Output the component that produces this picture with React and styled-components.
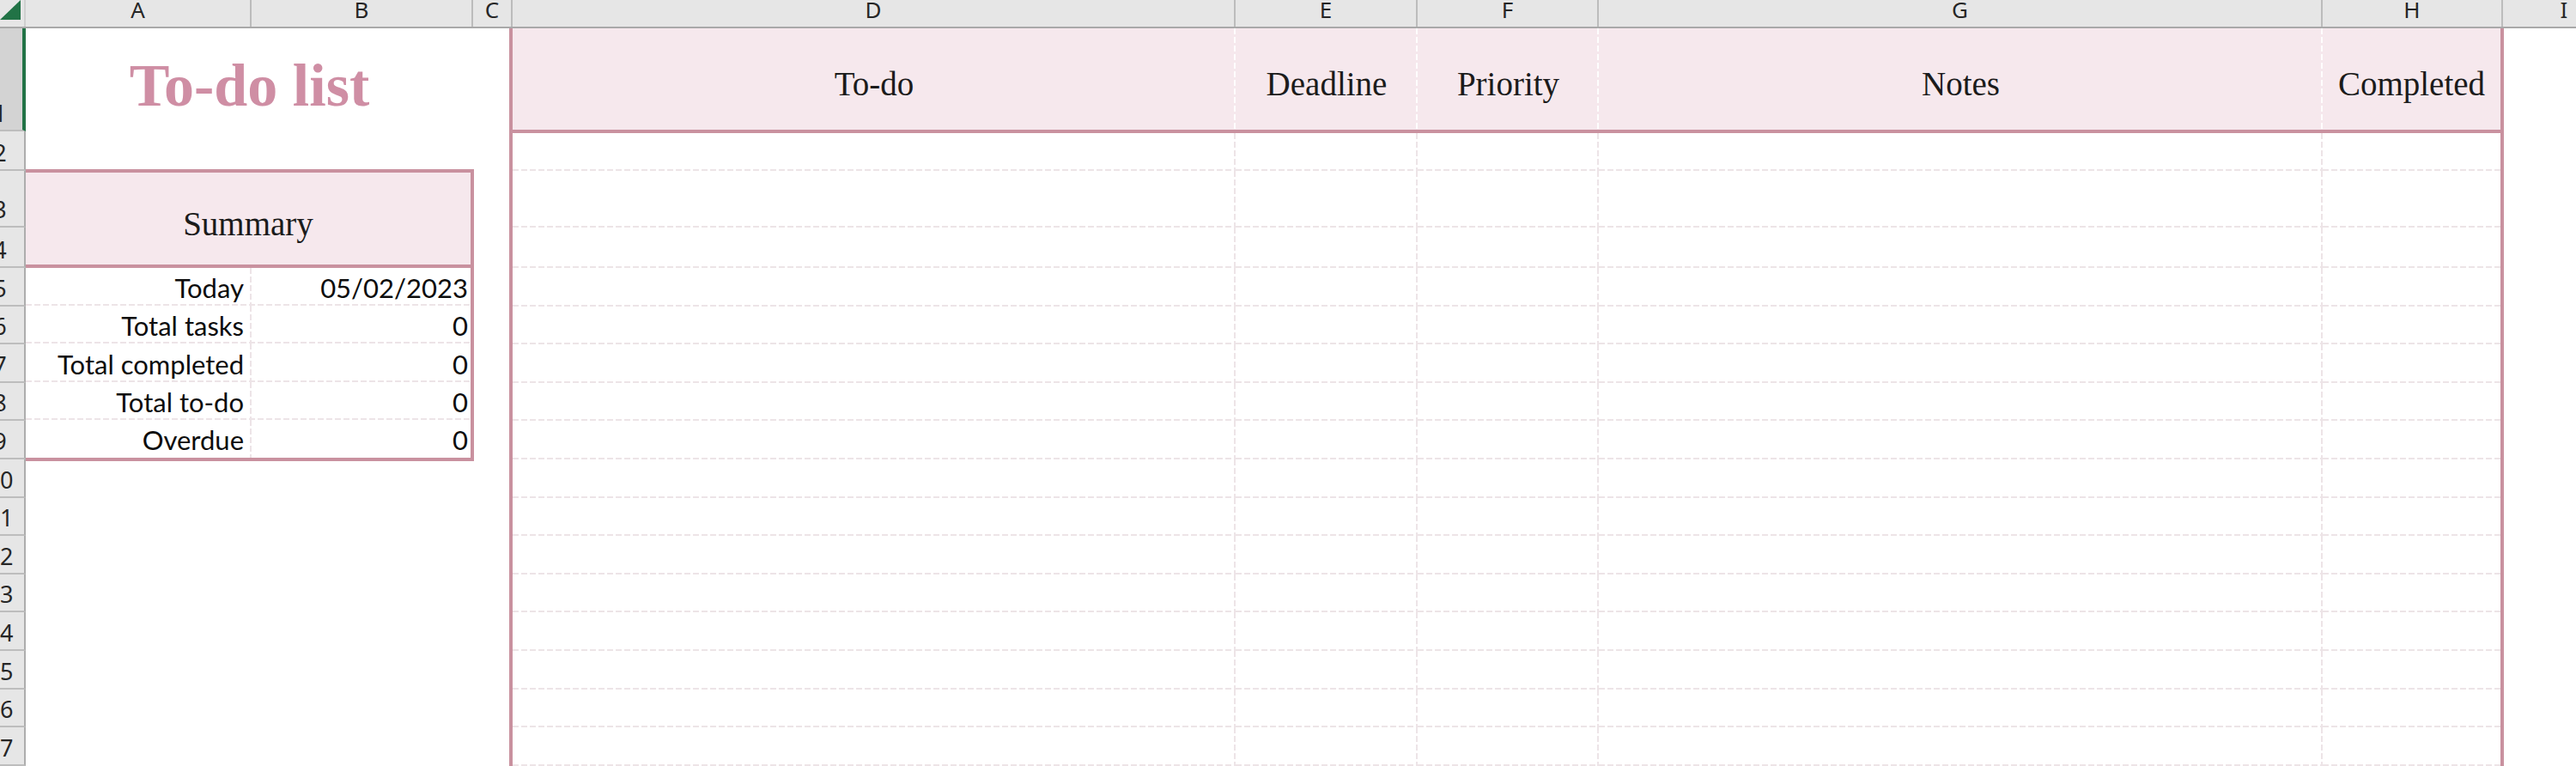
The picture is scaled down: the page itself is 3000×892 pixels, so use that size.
import React from 'react';
import styled, { createGlobalStyle, css } from 'styled-components';

const PINK = '#c9919f';
const PINK_FILL = '#f6e8ed';
const TITLE = '#cf8ea4';
const GRID_DASH = '#ede4e7';
const SERIF = '"Liberation Serif", "Times New Roman", serif';
const SANS = 'Lato, "Liberation Sans", sans-serif';
const UI = '"Noto Sans", "Open Sans", sans-serif';

// column widths as measured on the sheet
const COLUMNS = [
  { key: 'A', width: 263 },
  { key: 'B', width: 258 },
  { key: 'C', width: 46 },
  { key: 'D', width: 842 },
  { key: 'E', width: 212 },
  { key: 'F', width: 211 },
  { key: 'G', width: 843 },
  { key: 'H', width: 210 },
  { key: 'I', width: 144 },
];

const ROWS = [120, 46, 66, 47, ...Array(13).fill(44.6)];
// the to-do table eats 2px of row 2 with its thick header rule
const TABLE_ROWS = [122, 44, ...ROWS.slice(2)];

const TODO_HEADERS = ['To-do', 'Deadline', 'Priority', 'Notes', 'Completed'];

const STATS = [
  { label: 'Today', value: '05/02/2023' },
  { label: 'Total tasks', value: '0' },
  { label: 'Total completed', value: '0' },
  { label: 'Total to-do', value: '0' },
  { label: 'Overdue', value: '0' },
];

const px = (list) => list.map((v) => `${v}px`).join(' ');

const dashes = (dir, color) =>
  `repeating-linear-gradient(${dir}, ${color} 0 7px, transparent 7px 10px)`;

const dashedEdges = ({ $bottom, $right, $color = GRID_DASH }) => {
  const layers = [];
  if ($bottom) layers.push(`${dashes('to right', $color)} left bottom / 100% 2px no-repeat`);
  if ($right) layers.push(`${dashes('to bottom', $color)} right top / 2px 100% no-repeat`);
  return layers.length ? css`background: ${layers.join(', ')};` : '';
};

const GlobalStyle = createGlobalStyle`
  html, body {
    margin: 0;
    padding: 0;
    background: #ffffff;
    overflow: hidden;
  }
`;

const Page = styled.div`
  width: 3000px;
  height: 892px;
  overflow: hidden;
  background: #ffffff;
`;

/* column letters */

const ColumnBar = styled.div`
  display: flex;
  height: 33px;
  box-sizing: border-box;
  border-bottom: 2px solid #a9a9a9;
  background: #e6e6e6;
`;

const Corner = styled.div`
  flex: 0 0 30px;
  box-sizing: border-box;
  border-right: 2px solid #cfcfcf;
  display: flex;
  align-items: flex-start;
`;

const ColHead = styled.div`
  flex: 0 0 ${(p) => p.$width}px;
  box-sizing: border-box;
  border-right: 2px solid #bcbcbc;
  display: flex;
  justify-content: center;
  align-items: flex-start;
  font-family: ${UI};
  font-size: 26px;
  line-height: 22px;
  color: #262626;
`;

/* body */

const Body = styled.div`
  display: flex;
`;

const RowBar = styled.div`
  flex: 0 0 30px;
  display: grid;
  grid-template-rows: ${px(ROWS)};
`;

const RowHead = styled.div`
  box-sizing: border-box;
  display: flex;
  align-items: flex-end;
  overflow: hidden;
  padding-bottom: 8px;
  background: ${(p) => (p.$selected ? '#d3d3d3' : '#e6e6e6')};
  border-bottom: 2px solid #bdbdbd;
  border-right: ${(p) => (p.$selected ? '4px solid #217346' : '2px solid #adadad')};
`;

const RowNum = styled.span`
  flex: 0 0 60px;
  margin-left: -30px;
  text-align: center;
  font-family: ${UI};
  font-size: 27px;
  line-height: 22px;
  color: #262626;
`;

const Sheet = styled.div`
  display: grid;
  grid-template-columns: ${px(COLUMNS.map((c) => c.width))};
  grid-template-rows: ${px(ROWS)};
`;

const Title = styled.h1`
  grid-column: 1 / 3;
  grid-row: 1;
  margin: 0;
  padding-top: 14px;
  display: flex;
  align-items: center;
  justify-content: center;
  font-family: ${SERIF};
  font-weight: 700;
  font-size: 70px;
  color: ${TITLE};
`;

/* summary block */

const Summary = styled.section`
  grid-column: 1 / 3;
  grid-row: 3 / 10;
  margin: -2px -1px -2px 0;
  display: flex;
  flex-direction: column;
  border: 4px solid ${PINK};
  border-left: none;
`;

const SummaryHead = styled.div`
  flex: 0 0 111px;
  box-sizing: border-box;
  padding-top: 11px;
  display: flex;
  align-items: center;
  justify-content: center;
  background: ${PINK_FILL};
  border-bottom: 4px solid ${PINK};
  font-family: ${SERIF};
  font-size: 39px;
  color: #1b1b1b;
`;

const StatRow = styled.div`
  flex: 1;
  display: grid;
  grid-template-columns: 263px 1fr;
  ${dashedEdges}
`;

const StatCell = styled.div`
  display: flex;
  align-items: flex-end;
  justify-content: flex-end;
  padding: 0 ${(p) => (p.$label ? 9 : 3)}px 6px 0;
  font-family: ${SANS};
  font-size: 31px;
  line-height: 30px;
  color: #0d0d0d;
  ${dashedEdges}
`;

/* to-do table */

const TodoTable = styled.section`
  grid-column: 4 / 9;
  grid-row: 1 / -1;
  margin: 0 -1px 0 -4px;
  display: grid;
  grid-template-columns: 842px 212px 211px 843px 1fr;
  grid-template-rows: ${px(TABLE_ROWS)};
  border-left: 4px solid ${PINK};
  border-right: 4px solid ${PINK};
`;

const HeadCell = styled.div`
  box-sizing: border-box;
  padding-top: 11px;
  display: flex;
  align-items: center;
  justify-content: center;
  background-color: ${PINK_FILL};
  border-bottom: 4px solid ${PINK};
  font-family: ${SERIF};
  font-size: 39px;
  color: #1b1b1b;
  white-space: nowrap;
  ${(p) =>
    p.$right &&
    css`
      background: ${dashes('to bottom', 'rgba(255,255,255,0.9)')} right top / 2px 100% no-repeat,
        ${PINK_FILL};
    `}
`;

const TodoCell = styled.div`
  ${dashedEdges}
`;

const CornerMark = () => (
  <svg width="24" height="23" viewBox="0 0 24 23" aria-hidden="true">
    <polygon points="0,23 24,0 24,23" fill="#217346" />
  </svg>
);

export default function App() {
  const bodyRows = TABLE_ROWS.length - 1;
  return (
    <>
      <GlobalStyle />
      <Page>
        <ColumnBar>
          <Corner>
            <CornerMark />
          </Corner>
          {COLUMNS.map((c) => (
            <ColHead key={c.key} $width={c.width}>
              {c.key}
            </ColHead>
          ))}
        </ColumnBar>

        <Body>
          <RowBar>
            {ROWS.map((_, i) => (
              <RowHead key={i} $selected={i === 0}>
                <RowNum>{i + 1}</RowNum>
              </RowHead>
            ))}
          </RowBar>

          <Sheet>
            <Title>To-do list</Title>

            <Summary>
              <SummaryHead>Summary</SummaryHead>
              {STATS.map((s, i) => (
                <StatRow key={s.label} $bottom={i < STATS.length - 1}>
                  <StatCell $label $right>
                    {s.label}
                  </StatCell>
                  <StatCell>{s.value}</StatCell>
                </StatRow>
              ))}
            </Summary>

            <TodoTable>
              {TODO_HEADERS.map((h, i) => (
                <HeadCell key={h} $right={i < TODO_HEADERS.length - 1}>
                  {h}
                </HeadCell>
              ))}
              {Array.from({ length: bodyRows }).map((_, r) =>
                TODO_HEADERS.map((h, c) => (
                  <TodoCell key={`${r}-${h}`} $bottom $right={c < TODO_HEADERS.length - 1} />
                ))
              )}
            </TodoTable>
          </Sheet>
        </Body>
      </Page>
    </>
  );
}
